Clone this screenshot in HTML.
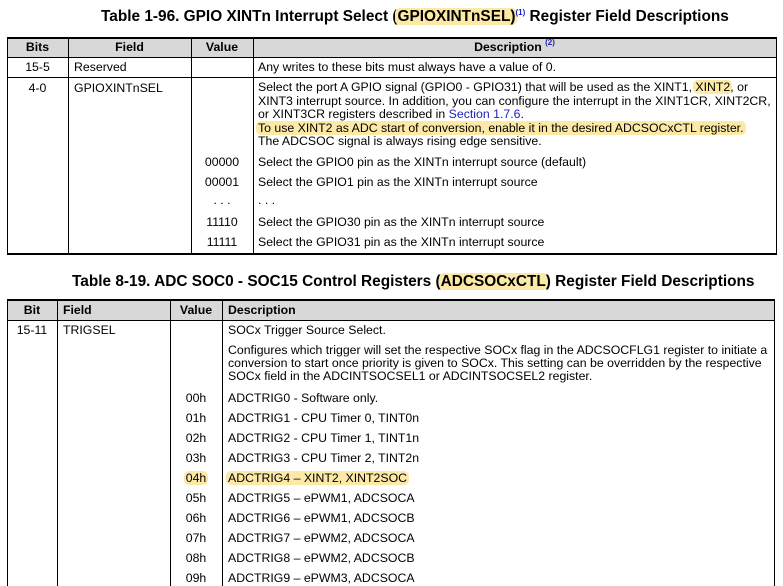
<!DOCTYPE html><html><head><style>
body{margin:0;width:783px;height:586px;background:#fff;position:relative;overflow:hidden;font-family:"Liberation Sans",Arial,sans-serif;font-size:12.3px;color:#000}
.a{position:absolute;white-space:nowrap;line-height:14px}
.l{position:absolute;background:#000}
.t{position:absolute;font-weight:bold;font-size:15.4px;white-space:nowrap;line-height:18px}
.h{background:#fde9a6;border-radius:5px;padding:0 2px;margin:0 -2px}
.c{text-align:center}
sup{color:#2020c0;font-size:8px;font-weight:bold;line-height:0;vertical-align:6px}
.lk{color:#2020c0}
</style></head><body>
<div class="t" style="left:101px;top:8px">Table 1-96. GPIO XINTn Interrupt Select (<span class="h">GPIOXINTnSEL)</span><sup>(1)</sup> Register Field Descriptions</div>
<div style="position:absolute;left:7px;top:38px;width:770px;height:19px;background:#d8d8d8"></div>
<div class="l" style="left:7px;top:37px;width:770px;height:2px"></div>
<div class="l" style="left:7px;top:57px;width:770px;height:1px"></div>
<div class="l" style="left:7px;top:77px;width:770px;height:1px"></div>
<div class="l" style="left:7px;top:253px;width:770px;height:2px"></div>
<div class="l" style="left:7px;top:37px;width:1px;height:218px"></div>
<div class="l" style="left:68px;top:37px;width:1px;height:218px"></div>
<div class="l" style="left:191px;top:37px;width:1px;height:218px"></div>
<div class="l" style="left:253px;top:37px;width:1px;height:218px"></div>
<div class="l" style="left:776px;top:37px;width:1px;height:218px"></div>
<div class="a c" style="left:7px;width:61px;top:40px;font-weight:bold">Bits</div>
<div class="a c" style="left:68px;width:123px;top:40px;font-weight:bold">Field</div>
<div class="a c" style="left:191px;width:62px;top:40px;font-weight:bold">Value</div>
<div class="a c" style="left:253px;width:523px;top:40px;font-weight:bold">Description <sup>(2)</sup></div>
<div class="a c" style="left:7px;width:61px;top:60px">15-5</div>
<div class="a" style="left:74px;top:60px">Reserved</div>
<div class="a" style="left:258px;top:60px">Any writes to these bits must always have a value of 0.</div>
<div class="a c" style="left:7px;width:61px;top:81px">4-0</div>
<div class="a" style="left:74px;top:81px">GPIOXINTnSEL</div>
<div class="a" style="left:258px;top:81px;line-height:13.5px">Select the port A GPIO signal (GPIO0 - GPIO31) that will be used as the XINT1, <span class="h">XINT2</span>, or<br>XINT3 interrupt source. In addition, you can configure the interrupt in the XINT1CR, XINT2CR,<br>or XINT3CR registers described in <span class="lk">Section 1.7.6</span>.<br><span class="h">To use XINT2 as ADC start of conversion, enable it in the desired ADCSOCxCTL register.</span><br>The ADCSOC signal is always rising edge sensitive.</div>
<div class="a c" style="left:191px;width:62px;top:155px">00000</div><div class="a" style="left:258px;top:155px">Select the GPIO0 pin as the XINTn interrupt source (default)</div>
<div class="a c" style="left:191px;width:62px;top:175px">00001</div><div class="a" style="left:258px;top:175px">Select the GPIO1 pin as the XINTn interrupt source</div>
<div class="a c" style="left:191px;width:62px;top:193px">. . .</div><div class="a" style="left:258px;top:193px">. . .</div>
<div class="a c" style="left:191px;width:62px;top:215px">11110</div><div class="a" style="left:258px;top:215px">Select the GPIO30 pin as the XINTn interrupt source</div>
<div class="a c" style="left:191px;width:62px;top:235px">11111</div><div class="a" style="left:258px;top:235px">Select the GPIO31 pin as the XINTn interrupt source</div>

<div class="t" style="left:72px;top:273px">Table 8-19. ADC SOC0 - SOC15 Control Registers (<span class="h">ADCSOCxCTL</span>) Register Field Descriptions</div>
<div style="position:absolute;left:7px;top:300px;width:768px;height:20px;background:#d8d8d8"></div>
<div class="l" style="left:7px;top:299px;width:768px;height:2px"></div>
<div class="l" style="left:7px;top:320px;width:768px;height:1px"></div>
<div class="l" style="left:7px;top:299px;width:1px;height:287px"></div>
<div class="l" style="left:57px;top:299px;width:1px;height:287px"></div>
<div class="l" style="left:170px;top:299px;width:1px;height:287px"></div>
<div class="l" style="left:222px;top:299px;width:1px;height:287px"></div>
<div class="l" style="left:774px;top:299px;width:1px;height:287px"></div>
<div class="a c" style="left:7px;width:50px;top:303px;font-weight:bold">Bit</div>
<div class="a" style="left:63px;top:303px;font-weight:bold">Field</div>
<div class="a c" style="left:170px;width:52px;top:303px;font-weight:bold">Value</div>
<div class="a" style="left:228px;top:303px;font-weight:bold">Description</div>
<div class="a c" style="left:7px;width:50px;top:323px">15-11</div>
<div class="a" style="left:63px;top:323px">TRIGSEL</div>
<div class="a" style="left:228px;top:323px">SOCx Trigger Source Select.</div>
<div class="a" style="left:228px;top:344px;line-height:13px">Configures which trigger will set the respective SOCx flag in the ADCSOCFLG1 register to initiate a<br>conversion to start once priority is given to SOCx. This setting can be overridden by the respective<br>SOCx field in the ADCINTSOCSEL1 or ADCINTSOCSEL2 register.</div>
<div class="a c" style="left:170px;width:52px;top:391px">00h</div><div class="a" style="left:228px;top:391px">ADCTRIG0 - Software only.</div>
<div class="a c" style="left:170px;width:52px;top:411px">01h</div><div class="a" style="left:228px;top:411px">ADCTRIG1 - CPU Timer 0, TINT0n</div>
<div class="a c" style="left:170px;width:52px;top:431px">02h</div><div class="a" style="left:228px;top:431px">ADCTRIG2 - CPU Timer 1, TINT1n</div>
<div class="a c" style="left:170px;width:52px;top:451px">03h</div><div class="a" style="left:228px;top:451px">ADCTRIG3 - CPU Timer 2, TINT2n</div>
<div class="a c" style="left:170px;width:52px;top:471px"><span class="h">04h</span></div><div class="a" style="left:228px;top:471px"><span class="h">ADCTRIG4 – XINT2, XINT2SOC</span></div>
<div class="a c" style="left:170px;width:52px;top:491px">05h</div><div class="a" style="left:228px;top:491px">ADCTRIG5 – ePWM1, ADCSOCA</div>
<div class="a c" style="left:170px;width:52px;top:511px">06h</div><div class="a" style="left:228px;top:511px">ADCTRIG6 – ePWM1, ADCSOCB</div>
<div class="a c" style="left:170px;width:52px;top:531px">07h</div><div class="a" style="left:228px;top:531px">ADCTRIG7 – ePWM2, ADCSOCA</div>
<div class="a c" style="left:170px;width:52px;top:551px">08h</div><div class="a" style="left:228px;top:551px">ADCTRIG8 – ePWM2, ADCSOCB</div>
<div class="a c" style="left:170px;width:52px;top:571px">09h</div><div class="a" style="left:228px;top:571px">ADCTRIG9 – ePWM3, ADCSOCA</div>
</body></html>
